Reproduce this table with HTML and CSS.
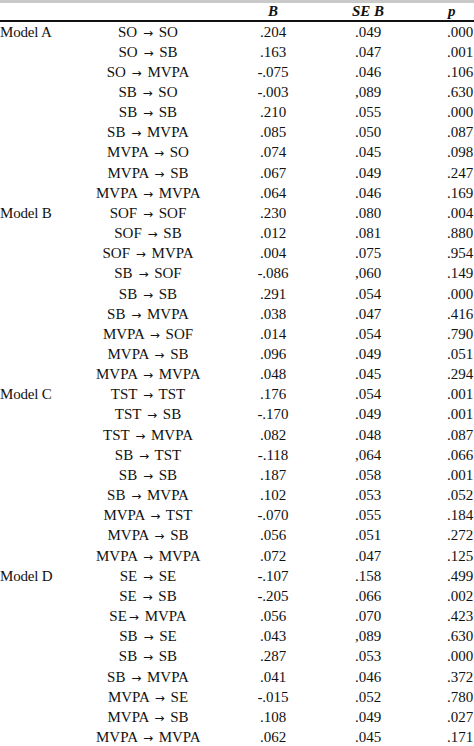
FILE: index.html
```html
<!DOCTYPE html>
<html>
<head>
<meta charset="utf-8">
<link rel="stylesheet" href="styles.css">
</head>
<body>
<div class="band"></div>
<div class="table">
  <div class="row head">
    <div class="c1"></div><div class="c2"></div>
    <div class="c3"><i>B</i></div><div class="c4"><i>SE B</i></div><div class="c5"><i>p</i></div>
  </div>
  <div class="rule"></div>
  <div class="row"><div class="c1">Model A</div><div class="c2">SO <span class="ar">→</span> SO</div><div class="c3">.204</div><div class="c4">.049</div><div class="c5">.000</div></div>
  <div class="row"><div class="c1"></div><div class="c2">SO <span class="ar">→</span> SB</div><div class="c3">.163</div><div class="c4">.047</div><div class="c5">.001</div></div>
  <div class="row"><div class="c1"></div><div class="c2">SO <span class="ar">→</span> MVPA</div><div class="c3">-.075</div><div class="c4">.046</div><div class="c5">.106</div></div>
  <div class="row"><div class="c1"></div><div class="c2">SB <span class="ar">→</span> SO</div><div class="c3">-.003</div><div class="c4">,089</div><div class="c5">.630</div></div>
  <div class="row"><div class="c1"></div><div class="c2">SB <span class="ar">→</span> SB</div><div class="c3">.210</div><div class="c4">.055</div><div class="c5">.000</div></div>
  <div class="row"><div class="c1"></div><div class="c2">SB <span class="ar">→</span> MVPA</div><div class="c3">.085</div><div class="c4">.050</div><div class="c5">.087</div></div>
  <div class="row"><div class="c1"></div><div class="c2">MVPA <span class="ar">→</span> SO</div><div class="c3">.074</div><div class="c4">.045</div><div class="c5">.098</div></div>
  <div class="row"><div class="c1"></div><div class="c2">MVPA <span class="ar">→</span> SB</div><div class="c3">.067</div><div class="c4">.049</div><div class="c5">.247</div></div>
  <div class="row"><div class="c1"></div><div class="c2">MVPA <span class="ar">→</span> MVPA</div><div class="c3">.064</div><div class="c4">.046</div><div class="c5">.169</div></div>
  <div class="row"><div class="c1">Model B</div><div class="c2">SOF <span class="ar">→</span> SOF</div><div class="c3">.230</div><div class="c4">.080</div><div class="c5">.004</div></div>
  <div class="row"><div class="c1"></div><div class="c2">SOF <span class="ar">→</span> SB</div><div class="c3">.012</div><div class="c4">.081</div><div class="c5">.880</div></div>
  <div class="row"><div class="c1"></div><div class="c2">SOF <span class="ar">→</span> MVPA</div><div class="c3">.004</div><div class="c4">.075</div><div class="c5">.954</div></div>
  <div class="row"><div class="c1"></div><div class="c2">SB <span class="ar">→</span> SOF</div><div class="c3">-.086</div><div class="c4">,060</div><div class="c5">.149</div></div>
  <div class="row"><div class="c1"></div><div class="c2">SB <span class="ar">→</span> SB</div><div class="c3">.291</div><div class="c4">.054</div><div class="c5">.000</div></div>
  <div class="row"><div class="c1"></div><div class="c2">SB <span class="ar">→</span> MVPA</div><div class="c3">.038</div><div class="c4">.047</div><div class="c5">.416</div></div>
  <div class="row"><div class="c1"></div><div class="c2">MVPA <span class="ar">→</span> SOF</div><div class="c3">.014</div><div class="c4">.054</div><div class="c5">.790</div></div>
  <div class="row"><div class="c1"></div><div class="c2">MVPA <span class="ar">→</span> SB</div><div class="c3">.096</div><div class="c4">.049</div><div class="c5">.051</div></div>
  <div class="row"><div class="c1"></div><div class="c2">MVPA <span class="ar">→</span> MVPA</div><div class="c3">.048</div><div class="c4">.045</div><div class="c5">.294</div></div>
  <div class="row"><div class="c1">Model C</div><div class="c2">TST <span class="ar">→</span> TST</div><div class="c3">.176</div><div class="c4">.054</div><div class="c5">.001</div></div>
  <div class="row"><div class="c1"></div><div class="c2">TST <span class="ar">→</span> SB</div><div class="c3">-.170</div><div class="c4">.049</div><div class="c5">.001</div></div>
  <div class="row"><div class="c1"></div><div class="c2">TST <span class="ar">→</span> MVPA</div><div class="c3">.082</div><div class="c4">.048</div><div class="c5">.087</div></div>
  <div class="row"><div class="c1"></div><div class="c2">SB <span class="ar">→</span> TST</div><div class="c3">-.118</div><div class="c4">,064</div><div class="c5">.066</div></div>
  <div class="row"><div class="c1"></div><div class="c2">SB <span class="ar">→</span> SB</div><div class="c3">.187</div><div class="c4">.058</div><div class="c5">.001</div></div>
  <div class="row"><div class="c1"></div><div class="c2">SB <span class="ar">→</span> MVPA</div><div class="c3">.102</div><div class="c4">.053</div><div class="c5">.052</div></div>
  <div class="row"><div class="c1"></div><div class="c2">MVPA <span class="ar">→</span> TST</div><div class="c3">-.070</div><div class="c4">.055</div><div class="c5">.184</div></div>
  <div class="row"><div class="c1"></div><div class="c2">MVPA <span class="ar">→</span> SB</div><div class="c3">.056</div><div class="c4">.051</div><div class="c5">.272</div></div>
  <div class="row"><div class="c1"></div><div class="c2">MVPA <span class="ar">→</span> MVPA</div><div class="c3">.072</div><div class="c4">.047</div><div class="c5">.125</div></div>
  <div class="row"><div class="c1">Model D</div><div class="c2">SE <span class="ar">→</span> SE</div><div class="c3">-.107</div><div class="c4">.158</div><div class="c5">.499</div></div>
  <div class="row"><div class="c1"></div><div class="c2">SE <span class="ar">→</span> SB</div><div class="c3">-.205</div><div class="c4">.066</div><div class="c5">.002</div></div>
  <div class="row"><div class="c1"></div><div class="c2">SE<span class="ar">→</span> MVPA</div><div class="c3">.056</div><div class="c4">.070</div><div class="c5">.423</div></div>
  <div class="row"><div class="c1"></div><div class="c2">SB <span class="ar">→</span> SE</div><div class="c3">.043</div><div class="c4">,089</div><div class="c5">.630</div></div>
  <div class="row"><div class="c1"></div><div class="c2">SB <span class="ar">→</span> SB</div><div class="c3">.287</div><div class="c4">.053</div><div class="c5">.000</div></div>
  <div class="row"><div class="c1"></div><div class="c2">SB <span class="ar">→</span> MVPA</div><div class="c3">.041</div><div class="c4">.046</div><div class="c5">.372</div></div>
  <div class="row"><div class="c1"></div><div class="c2">MVPA <span class="ar">→</span> SE</div><div class="c3">-.015</div><div class="c4">.052</div><div class="c5">.780</div></div>
  <div class="row"><div class="c1"></div><div class="c2">MVPA <span class="ar">→</span> SB</div><div class="c3">.108</div><div class="c4">.049</div><div class="c5">.027</div></div>
  <div class="row"><div class="c1"></div><div class="c2">MVPA <span class="ar">→</span> MVPA</div><div class="c3">.062</div><div class="c4">.045</div><div class="c5">.171</div></div>
</div>
</body>
</html>
```
FILE: styles.css
```css
html, body {
  margin: 0;
  padding: 0;
  background: #ffffff;
  overflow: hidden;
}
body {
  width: 474px;
  height: 746px;
  font-family: "Liberation Serif", "Times New Roman", serif;
  font-size: 15px;
  color: #111111;
}
.band {
  height: 3px;
  background: #c9c9c9;
}
.table {
  width: 474px;
  overflow: hidden;
}
.row {
  display: grid;
  grid-template-columns: 96px 104px 146px 44px 84px;
  height: 20.17px;
  line-height: 20.17px;
  white-space: nowrap;
}
.row.head {
  height: 17px;
  line-height: 17px;
}
.head i {
  font-weight: bold;
  font-style: italic;
}
.rule {
  height: 1.5px;
  background: #111111;
}
.c1 {
  text-align: left;
  letter-spacing: -0.2px;
}
.c2, .c3, .c4 {
  text-align: center;
}
.c4 {
  display: flex;
  justify-content: center;
}
.c5 {
  text-align: left;
  padding-left: 57px;
}
.head .c5 {
  padding-left: 58px;
}
.ar {
  font-family: "DejaVu Sans", sans-serif;
  font-size: 12px;
  font-weight: normal;
  margin: 0 2px;
}
```
